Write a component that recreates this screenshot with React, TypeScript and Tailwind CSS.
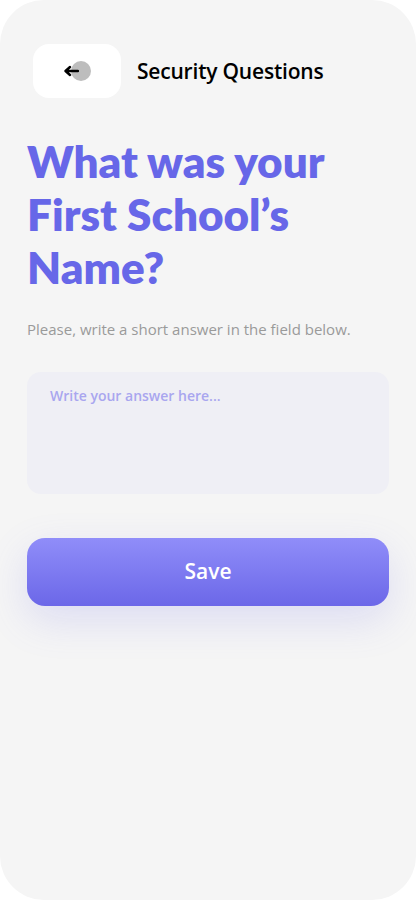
import { useState } from "react";

export default function App() {
  const [answer, setAnswer] = useState("");

  return (
    <div className="w-[416px] h-[900px] bg-white">
      <div
        className="w-full h-full bg-[#f5f5f5] rounded-[44px] px-[27px] pt-[44px]"
        style={{ fontFamily: "'Open Sans', 'Noto Sans', sans-serif" }}
      >
        {/* Header */}
        <div className="flex items-center">
          <button className="ml-[6px] w-[88px] h-[54px] bg-white rounded-[16px] flex items-center justify-center">
            <span className="relative w-[28px] h-[20px]">
              <span className="absolute left-[8px] top-0 w-[20px] h-[20px] rounded-full bg-[#bdbdbd]" />
              <svg
                className="absolute left-0 top-[3px]"
                width="16"
                height="14"
                viewBox="0 0 16 14"
                fill="none"
              >
                <path
                  d="M15 7H3M7 3L2.5 7L7 11"
                  stroke="#000"
                  strokeWidth="2.4"
                  strokeLinecap="round"
                  strokeLinejoin="round"
                />
              </svg>
            </span>
          </button>
          <h1 className="ml-[16px] text-[21px] leading-[28px] font-semibold text-black tracking-[-0.2px]">
            Security Questions
          </h1>
        </div>

        {/* Question */}
        <h2
          className="mt-[37px] text-[44px] leading-[53px] font-extrabold text-[#6767e8]"
          style={{ fontFamily: "Lato, sans-serif" }}
        >
          What was your
          <br />
          First School’s
          <br />
          Name?
        </h2>
        <p className="mt-[25px] text-[15px] leading-[20px] text-[#9a9a9a]">
          Please, write a short answer in the field below.
        </p>

        {/* Answer */}
        <textarea
          value={answer}
          onChange={(e) => setAnswer(e.target.value)}
          placeholder="Write your answer here..."
          className="mt-[33px] block w-full h-[122px] resize-none bg-[#efeff5] rounded-[14px] px-[23px] py-[13px] text-[14px] leading-[22px] font-semibold text-[#5a57d8] placeholder:text-[#a9a6ef] focus:outline-none"
        />

        <button className="mt-[44px] w-full h-[68px] rounded-[18px] bg-gradient-to-b from-[#908df9] to-[#6c67e8] text-white text-[21px] font-semibold shadow-[0_14px_40px_rgba(108,103,232,0.18)]">
          Save
        </button>
      </div>
    </div>
  );
}
